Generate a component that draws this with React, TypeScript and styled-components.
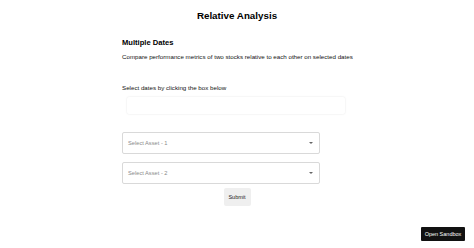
import React from "react";
import styled, { createGlobalStyle } from "styled-components";

const Global = createGlobalStyle`
  html, body { margin: 0; padding: 0; background: #fff; }
  body { font-family: "Liberation Sans", Arial, sans-serif; color: #000; }
`;

const Page = styled.div`
  width: 474px;
  height: 248px;
  position: relative;
  overflow: hidden;
  display: flex;
  flex-direction: column;
  align-items: center;
`;

const Title = styled.h1`
  margin: 9px 0 0;
  font-size: 9.8px;
  font-weight: 700;
  line-height: 14px;
`;

const Column = styled.div`
  width: 230px;
  display: flex;
  flex-direction: column;
  margin-top: 14.5px;
`;

const Subtitle = styled.h2`
  margin: 0;
  font-size: 7.6px;
  font-weight: 700;
  line-height: 9px;
`;

const Text = styled.p<{ $top: number }>`
  margin: ${(p) => p.$top}px 0 0;
  font-size: 6.2px;
  line-height: 8px;
  color: #111;
  white-space: nowrap;
`;

const DateBox = styled.div`
  margin: 5px 7px 0 5px;
  height: 17px;
  background: #fff;
  border-radius: 2px;
  box-shadow: 0 0 2px rgba(0, 0, 0, 0.12);
`;

const SelectBox = styled.div<{ $top: number }>`
  margin-top: ${(p) => p.$top}px;
  width: 198px;
  height: 22px;
  box-sizing: border-box;
  border: 1px solid #d9d9d9;
  border-radius: 2px;
  display: flex;
  align-items: center;
  justify-content: space-between;
  padding: 0 6px 0 5px;
  font-size: 5.7px;
  color: #8a8a8a;
`;

const Caret = styled.span`
  width: 0;
  height: 0;
  border-left: 2.5px solid transparent;
  border-right: 2.5px solid transparent;
  border-top: 2.5px solid #666;
`;

const SubmitRow = styled.div`
  display: flex;
  justify-content: center;
  margin-top: 4px;
  width: 230px;
`;

const Submit = styled.button`
  width: 27px;
  height: 18px;
  padding: 0;
  border: none;
  border-radius: 2px;
  background: #efefef;
  font-family: "Liberation Sans", Arial, sans-serif;
  font-size: 5.5px;
  color: #222;
`;

const Sandbox = styled.div`
  position: absolute;
  right: 9px;
  bottom: 7px;
  width: 44px;
  height: 14px;
  background: #111;
  border-radius: 1px;
  color: #fff;
  font-size: 5.5px;
  display: flex;
  align-items: center;
  justify-content: center;
`;

export default function App() {
  return (
    <Page>
      <Global />
      <Title>Relative Analysis</Title>
      <Column>
        <Subtitle>Multiple Dates</Subtitle>
        <Text $top={6.5}>
          Compare performance metrics of two stocks relative to each other on selected dates
        </Text>
        <Text $top={23}>Select dates by clicking the box below</Text>
        <DateBox />
        <SelectBox $top={18}>
          <span>Select Asset - 1</span>
          <Caret />
        </SelectBox>
        <SelectBox $top={8}>
          <span>Select Asset - 2</span>
          <Caret />
        </SelectBox>
      </Column>
      <SubmitRow>
        <Submit>Submit</Submit>
      </SubmitRow>
      <Sandbox>Open Sandbox</Sandbox>
    </Page>
  );
}
